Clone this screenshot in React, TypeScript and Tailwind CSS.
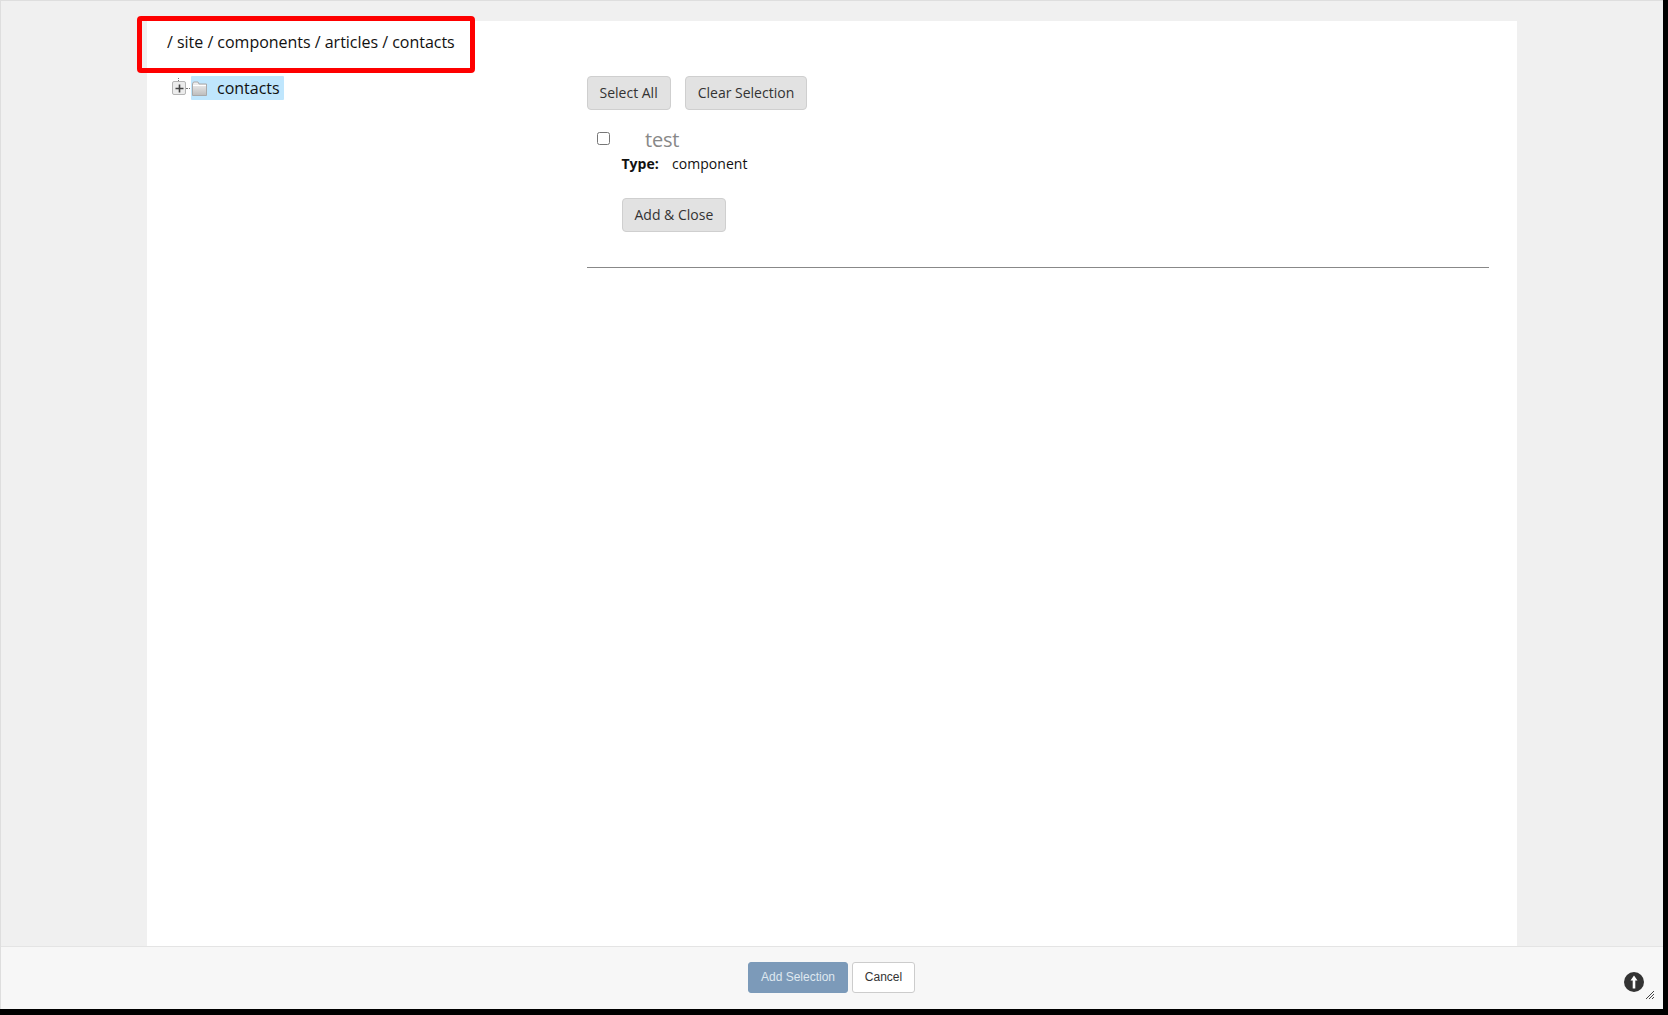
import React from 'react';

const grayBtn =
  'h-[34px] rounded-[4px] border border-[#cfcfcf] bg-[#e2e2e2] text-[14px] text-[#333] leading-none';

const FolderIcon = () => (
  <svg width="15" height="15" viewBox="0 0 15 15">
    <defs>
      <linearGradient id="fold" x1="0" y1="0" x2="0" y2="1">
        <stop offset="0" stopColor="#f4f4f4" />
        <stop offset="1" stopColor="#bcbcbc" />
      </linearGradient>
    </defs>
    <path d="M.5 3 L1.5 1 H6 L7 3 H14.5 V14.5 H.5 Z" fill="url(#fold)" stroke="#a9a9a9" strokeWidth="1" />
    <path d="M1 4.5 H14" stroke="#fff" strokeWidth="1" />
  </svg>
);

const Expander = () => (
  <span className="relative w-[14px] h-[14px] rounded-[2px] border border-[#b5b5b5] bg-[#ececec] flex items-center justify-center">
    <svg width="9" height="9" viewBox="0 0 9 9">
      <path d="M4.5 .5 V8.5 M.5 4.5 H8.5" stroke="#444" strokeWidth="1.6" />
    </svg>
    {/* dotted tree lines */}
    <span className="absolute left-[5px] top-[-4px] h-[3px] border-l border-dotted border-[#777]" />
    <span className="absolute left-[13px] top-[6px] w-[4px] border-t border-dotted border-[#777]" />
  </span>
);

export default function App() {
  return (
    <div className="w-[1668px] h-[1015px] bg-black overflow-hidden pr-[5px] pb-[6px] font-['Open_Sans',sans-serif]">
      <div className="relative h-full flex flex-col bg-[#f0f0f0] border-t border-l border-[#dedede]">
        <div className="flex-1 min-h-0 pt-[20px] pl-[146px]">
          <div className="w-[1370px] h-full bg-white flex">
            <div className="w-[440px] shrink-0 pl-[20px]">
              <div className="h-[42px] flex items-center text-[16px] tracking-[-0.02px] text-[#111]">
                / site / components / articles / contacts
              </div>
              <div className="mt-[13px] flex items-center pl-[5px]">
                <Expander />
                <div className="ml-[5px] h-[24px] pl-[1px] pr-[4px] flex items-center bg-[#bfe6fd] rounded-[1px]">
                  <FolderIcon />
                  <span className="ml-[10px] text-[16px] text-[#111]">contacts</span>
                </div>
              </div>
            </div>
            <div className="w-[902px] pt-[55px]">
              <div className="flex gap-[14px]">
                <button className={grayBtn + ' pl-[11.5px] pr-[12.5px]'}>Select All</button>
                <button className={grayBtn + ' px-[11.5px]'}>Clear Selection</button>
              </div>
              <div className="mt-[16px] flex">
                <input type="checkbox" className="w-[13px] h-[13px] mt-[6px] ml-[10px]" />
                <div className="ml-[12px]">
                  <div className="pl-[23px] text-[20px] leading-[28px] tracking-[-0.2px] text-[#888]">test</div>
                  <div className="flex text-[14px] leading-[20px] text-[#111]">
                    <span className="font-bold w-[50.5px] -ml-[0.5px]">Type:</span>
                    <span className="tracking-[0.05px]">component</span>
                  </div>
                  <button className={grayBtn + ' px-[11.5px] mt-[24px]'}>Add &amp; Close</button>
                </div>
              </div>
              <div className="mt-[35px] h-px bg-[#888]" />
            </div>
          </div>
        </div>
        <div className="relative h-[63px] shrink-0 bg-[#f7f7f7] border-t border-[#e4e4e4] flex items-start justify-center gap-[4px] pt-[15px] pr-[1px] font-['Liberation_Sans',sans-serif] text-[12px]">
          <button className="h-[31px] w-[100px] pb-[1px] rounded-[3px] border border-[#7b9ab9] bg-[#7c9ab9] text-[#dfe8f0]">
            Add Selection
          </button>
          <button className="h-[31px] w-[63px] pb-[1px] rounded-[3px] border border-[#ccc] bg-white text-[#333]">
            Cancel
          </button>
          <span className="absolute right-[19px] top-[25px] w-[20px] h-[20px] rounded-full bg-[#333] flex items-center justify-center">
            <svg width="12" height="16" viewBox="0 0 12 16">
              <path d="M6 1.5 L9.5 6.5 H7.3 V14.5 H4.7 V6.5 H2.5 Z" fill="#fff" />
            </svg>
          </span>
          <svg className="absolute right-[9px] bottom-[10px]" width="8" height="8" viewBox="0 0 8 8">
            <path d="M0 8 L8 0 M3 8 L8 3 M6 8 L8 6" stroke="#444" strokeWidth="1" />
          </svg>
        </div>
        {/* red annotation box */}
        <div className="absolute left-[136px] top-[15px] w-[338px] h-[57px] border-[5px] border-[#fe0000] rounded-[4px] pointer-events-none" />
      </div>
    </div>
  );
}
